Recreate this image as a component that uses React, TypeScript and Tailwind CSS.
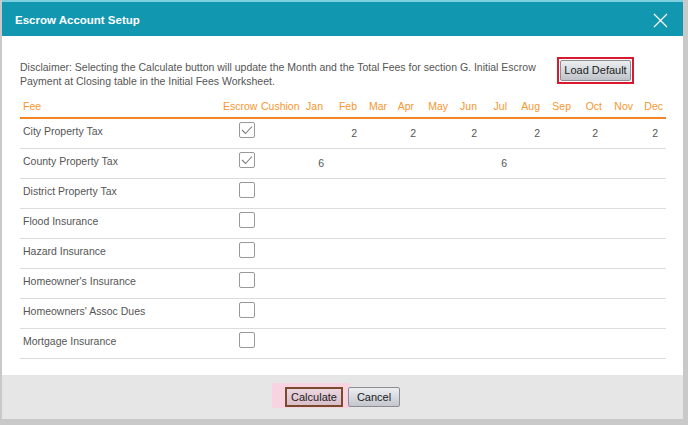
import { FC } from 'react';

const months = ['Jan', 'Feb', 'Mar', 'Apr', 'May', 'Jun', 'Jul', 'Aug', 'Sep', 'Oct', 'Nov', 'Dec'];

// data cells don't line up exactly under the header text in the original
const valuePad: Record<string, string> = {
  Jan: 'pr-[2px]',
  Apr: 'pr-[1px]',
  Oct: 'pr-[7px]',
  Dec: 'pr-[8px]',
};

type Fee = {
  name: string;
  escrow: boolean;
  values: Record<string, string>;
};

const fees: Fee[] = [
  { name: 'City Property Tax', escrow: true, values: { Feb: '2', Apr: '2', Jun: '2', Aug: '2', Oct: '2', Dec: '2' } },
  { name: 'County Property Tax', escrow: true, values: { Jan: '6', Jul: '6' } },
  { name: 'District Property Tax', escrow: false, values: {} },
  { name: 'Flood Insurance', escrow: false, values: {} },
  { name: 'Hazard Insurance', escrow: false, values: {} },
  { name: "Homeowner's Insurance", escrow: false, values: {} },
  { name: "Homeowners' Assoc Dues", escrow: false, values: {} },
  { name: 'Mortgage Insurance', escrow: false, values: {} },
];

const cols =
  'grid grid-cols-[200px_39px_44px_23px_34px_30px_27px_34px_29px_30px_33px_31px_31px_31px_30px]';

const Checkbox: FC<{ checked: boolean }> = ({ checked }) => (
  <div className="ml-[19px] mt-[3px] flex h-[16px] w-[16px] items-center justify-center rounded-[2px] border border-[#999] bg-white">
    {checked && (
      <svg width="12" height="10" viewBox="0 0 12 10" fill="none">
        <path d="M1 5 L4.5 8.5 L11 1.5" stroke="#7d7d7d" strokeWidth="1.1" />
      </svg>
    )}
  </div>
);

export default function App() {
  return (
    <div
      className="h-[425px] w-[688px] bg-[#c9c9c9] text-[10.5px] text-[#555]"
      style={{ fontFamily: '"Liberation Sans", Arial, sans-serif' }}
    >
      <div className="ml-[2px] flex h-[419px] w-[681px] flex-col bg-white">
        {/* header */}
        <div className="flex h-[36px] shrink-0 items-center justify-between border-t-2 border-[#7ccfdf] bg-[#1297b1] pl-[13px] pr-[15px] pt-[3px]">
          <span className="text-[11.5px] font-bold text-white">Escrow Account Setup</span>
          <svg width="15" height="15" viewBox="0 0 15 15" fill="none">
            <path d="M1 1 L14 14 M14 1 L1 14" stroke="white" strokeWidth="1.2" />
          </svg>
        </div>

        {/* body */}
        <div className="flex-1 pl-[18px] pr-[17px] pt-[23px]">
          <div className="flex items-start">
            <p className="w-[525px] pt-[1px] leading-[14px]">
              Disclaimer: Selecting the Calculate button will update the Month and the Total Fees for section G. Initial
              Escrow Payment at Closing table in the Initial Fees Worksheet.
            </p>
            <div className="ml-[12px] mt-[-2px] border-2 border-[#d8192f] p-[1px]">
              <button className="h-[21px] w-[71px] rounded-[2px] border border-[#8a8d92] bg-gradient-to-b from-[#eceef1] to-[#bfc3c9] text-[11px] text-[#222]">
                Load Default
              </button>
            </div>
          </div>

          <div className="mt-[7px]">
            <div className={`${cols} h-[24px] items-center border-b-2 border-[#f58426] pt-[2px] text-[#f7962e]`}>
              <div className="pl-[3px]">Fee</div>
              <div className="pl-[3px]">Escrow</div>
              <div className="pl-[2px]">Cushion</div>
              {months.map((m) => (
                <div key={m} className="pr-[3px] text-right">
                  {m}
                </div>
              ))}
            </div>
            {fees.map((f) => (
              <div key={f.name} className={`${cols} h-[30px] items-start border-b border-[#dcdcdc]`}>
                <div className="pl-[3px] pt-[4px] leading-[16px]">{f.name}</div>
                <Checkbox checked={f.escrow} />
                <div />
                {months.map((m) => (
                  <div key={m} className={`${valuePad[m] ?? 'pr-[3px]'} pt-[6px] text-right leading-[16px]`}>
                    {f.values[m] ?? ''}
                  </div>
                ))}
              </div>
            ))}
          </div>
        </div>

        {/* footer */}
        <div className="relative flex h-[44px] shrink-0 items-center justify-center gap-[5px] bg-[#e6e6e6]">
          <div className="absolute left-[270px] top-[8px] h-[25px] w-[78px] bg-[#f8d3e2]" />
          <div className="relative border-2 border-[#7a4a2c]">
            <button className="h-[16px] w-[54px] bg-gradient-to-b from-[#ecd6df] to-[#d9bfca] text-[11px] leading-[16px] text-[#222]">
              Calculate
            </button>
          </div>
          <button className="relative h-[20px] w-[52px] rounded-[2px] border border-[#8a8d92] bg-gradient-to-b from-[#eceef1] to-[#c3c7cd] text-[11px] text-[#222]">
            Cancel
          </button>
        </div>
      </div>
    </div>
  );
}
